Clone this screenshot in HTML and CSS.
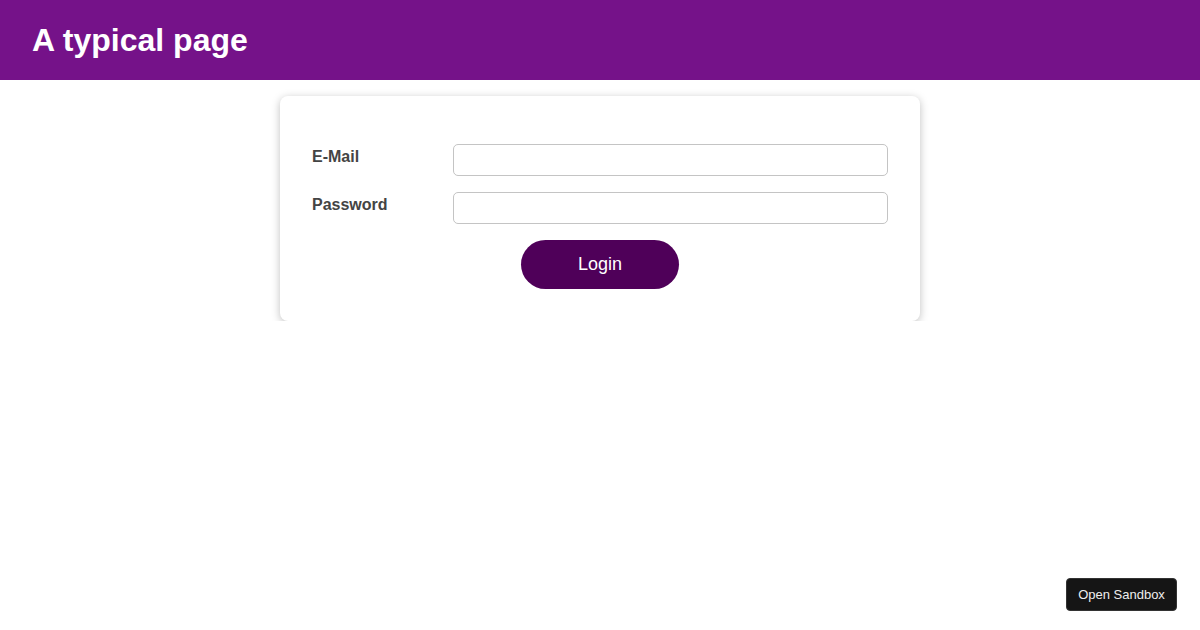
FILE: index.html
```html
<!DOCTYPE html>
<html>
<head>
<meta charset="utf-8">
<link rel="stylesheet" href="styles.css">
</head>
<body>
<header class="topbar"><h1 class="title">A typical page</h1></header>
<main class="main">
  <form class="card">
    <div class="row">
      <label class="label">E-Mail</label>
      <input class="input" type="text">
    </div>
    <div class="row">
      <label class="label">Password</label>
      <input class="input" type="password">
    </div>
    <div class="actions">
      <button class="login" type="button">Login</button>
    </div>
  </form>
</main>
<a class="sandbox">Open Sandbox</a>
</body>
</html>
```
FILE: styles.css
```css
* { box-sizing: border-box; }
html, body { margin: 0; padding: 0; background: #fff; font-family: "Liberation Sans", Arial, sans-serif; }
.topbar { height: 80px; background: #751289; display: flex; align-items: center; padding: 0 32px; }
.title { margin: 0; color: #fff; font-size: 32px; font-weight: bold; line-height: 1; }
.main { display: flex; justify-content: center; padding-top: 16px; }
.card { width: 640px; background: #fff; border-radius: 8px; box-shadow: 0 2px 8px rgba(0,0,0,0.25); padding: 48px 32px 32px; display: flex; flex-direction: column; gap: 16px; }
.row { display: grid; grid-template-columns: 141px 1fr; align-items: start; }
.label { color: #444; font-weight: bold; font-size: 16px; padding-top: 4px; line-height: 18px; }
.input { height: 32px; border: 1px solid #c4c4c4; border-radius: 5px; font-size: 16px; padding: 0 8px; margin: 0; }
.actions { display: flex; justify-content: center; }
.login { width: 158px; height: 49px; border: none; border-radius: 25px; background: #4f0059; color: #fff; font-family: "Liberation Sans", Arial, sans-serif; font-size: 18px; padding: 0; }
.sandbox { position: fixed; right: 23px; bottom: 19px; width: 111px; height: 33px; background: #151515; color: #eee; border-radius: 4px; font-size: 13px; display: flex; align-items: center; justify-content: center; border: 1px solid #333; }
```
